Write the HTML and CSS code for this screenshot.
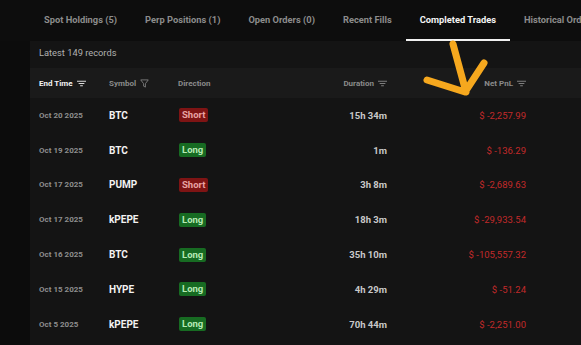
FILE: index.html
```html
<!DOCTYPE html>
<html lang="en">
<head>
    <meta charset="UTF-8">
    <meta name="viewport" content="width=device-width, initial-scale=1.0">
    <title>Completed Trades</title>
    <link rel="stylesheet" href="styles.css">
</head>
<body>
    <nav class="tabs">
        <div class="tab">Spot Holdings (5)</div>
        <div class="tab">Perp Positions (1)</div>
        <div class="tab">Open Orders (0)</div>
        <div class="tab">Recent Fills</div>
        <div class="tab active">Completed Trades</div>
        <div class="tab">Historical Orders</div>
    </nav>

    <section class="panel">
        <div class="records">Latest 149 records</div>

        <div class="row head">
            <div class="cell first">End Time
                <svg class="ico" viewBox="0 0 10 8"><path d="M0 1.5h10M1.8 4h6.4M3.5 6.5h3" stroke="currentColor" stroke-width="1"/></svg>
            </div>
            <div class="cell">Symbol
                <svg class="ico" viewBox="0 0 10 10"><path d="M0.8 1h8.4L6 5.2V9L4 8V5.2Z" fill="none" stroke="currentColor" stroke-width="0.9" stroke-linejoin="round"/></svg>
            </div>
            <div class="cell">Direction</div>
            <div class="cell right">Duration
                <svg class="ico" viewBox="0 0 10 8"><path d="M0 1.5h10M1.8 4h6.4M3.5 6.5h3" stroke="currentColor" stroke-width="1"/></svg>
            </div>
            <div class="cell right">Net PnL
                <svg class="ico" viewBox="0 0 10 8"><path d="M0 1.5h10M1.8 4h6.4M3.5 6.5h3" stroke="currentColor" stroke-width="1"/></svg>
            </div>
        </div>

        <div class="row">
            <div class="cell first date">Oct 20 2025</div>
            <div class="cell sym">BTC</div>
            <div class="cell"><span class="badge short">Short</span></div>
            <div class="cell right dur">15h 34m</div>
            <div class="cell right pnl">$ -2,257.99</div>
        </div>
        <div class="row">
            <div class="cell first date">Oct 19 2025</div>
            <div class="cell sym">BTC</div>
            <div class="cell"><span class="badge long">Long</span></div>
            <div class="cell right dur">1m</div>
            <div class="cell right pnl">$ -136.29</div>
        </div>
        <div class="row">
            <div class="cell first date">Oct 17 2025</div>
            <div class="cell sym">PUMP</div>
            <div class="cell"><span class="badge short">Short</span></div>
            <div class="cell right dur">3h 8m</div>
            <div class="cell right pnl">$ -2,689.63</div>
        </div>
        <div class="row">
            <div class="cell first date">Oct 17 2025</div>
            <div class="cell sym">kPEPE</div>
            <div class="cell"><span class="badge long">Long</span></div>
            <div class="cell right dur">18h 3m</div>
            <div class="cell right pnl">$ -29,933.54</div>
        </div>
        <div class="row">
            <div class="cell first date">Oct 16 2025</div>
            <div class="cell sym">BTC</div>
            <div class="cell"><span class="badge long">Long</span></div>
            <div class="cell right dur">35h 10m</div>
            <div class="cell right pnl">$ -105,557.32</div>
        </div>
        <div class="row">
            <div class="cell first date">Oct 15 2025</div>
            <div class="cell sym">HYPE</div>
            <div class="cell"><span class="badge long">Long</span></div>
            <div class="cell right dur">4h 29m</div>
            <div class="cell right pnl">$ -51.24</div>
        </div>
        <div class="row">
            <div class="cell first date">Oct 5 2025</div>
            <div class="cell sym">kPEPE</div>
            <div class="cell"><span class="badge long">Long</span></div>
            <div class="cell right dur">70h 44m</div>
            <div class="cell right pnl">$ -2,251.00</div>
        </div>
    </section>

    <!-- hand drawn marker pointing at Net PnL -->
    <svg class="arrow" viewBox="0 0 70 60" width="70" height="60">
        <path d="M31 4L44 52M5 40L43 52L62 23" fill="none" stroke="#f6a81e" stroke-width="7" stroke-linecap="round" stroke-linejoin="round"/>
    </svg>
</body>
</html>
```

FILE: styles.css
```css
body {
    margin: 0;
    padding: 0;
    background-color: #0c0c0c;
    font-family: Roboto, "Liberation Sans", Arial, sans-serif;
    width: 581px;
    height: 345px;
    overflow: hidden;
    position: relative;
}
.tabs {
    display: flex;
    padding-left: 30px;
    height: 41px;
    background-color: #0d0d0d;
    white-space: nowrap;
    overflow: hidden;
}
.tab {
    padding: 0 14px;
    line-height: 40px;
    font-size: 9.3px;
    font-weight: 700;
    color: #8c8c8c;
    border-bottom: 2px solid transparent;
    height: 39px;
}
.tab.active {
    color: #f4f4f4;
    border-bottom-color: #f0f0f0;
}
.panel {
    margin-left: 30px;
    background-color: #141414;
    min-height: 304px;
}
.records {
    height: 27px;
    line-height: 24px;
    padding-left: 9px;
    font-size: 9.3px;
    color: #b0b0b0;
}
.row {
    display: grid;
    grid-template-columns: 79px 69px 140px 69px 139px;
    align-items: center;
    height: 34.8px;
}
.row.head {
    height: 30px;
    background-color: #1a1a1a;
    font-size: 8px;
    font-weight: 700;
    color: #8a8a8a;
}
.row.head .first {
    color: #f2f2f2;
}
.cell {
    display: flex;
    align-items: center;
    gap: 4px;
    white-space: nowrap;
}
.cell.first {
    padding-left: 9px;
}
.cell.right {
    justify-content: flex-end;
}
.ico {
    width: 9px;
    height: 9px;
}
.date {
    font-size: 8px;
    font-weight: 700;
    color: #8e8e8e;
}
.sym {
    font-size: 10px;
    font-weight: 700;
    color: #f2f2f2;
}
.badge {
    display: inline-block;
    margin-left: 1px;
    padding: 1px 3px;
    border-radius: 2px;
    font-size: 9.5px;
    font-weight: 700;
    line-height: 12px;
}
.badge.short {
    background-color: #7e1414;
    color: #e8a3a3;
}
.badge.long {
    background-color: #176b22;
    color: #b5eab5;
}
.dur {
    font-size: 9.5px;
    font-weight: 700;
    color: #c8c8c8;
}
.pnl {
    font-size: 9.5px;
    color: #c22a2a;
}
.arrow {
    position: absolute;
    left: 422px;
    top: 40px;
}
```
